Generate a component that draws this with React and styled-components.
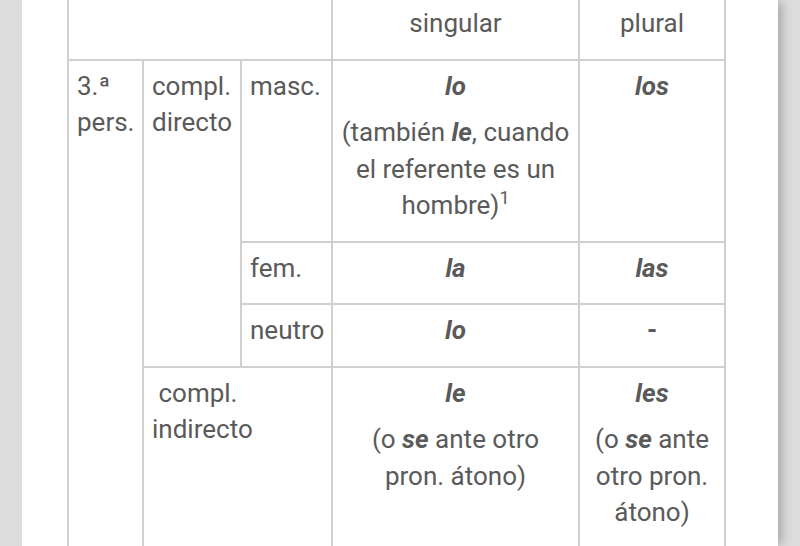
import styled, { createGlobalStyle } from 'styled-components';

const GlobalStyle = createGlobalStyle`
    html, body {
        margin: 0;
        padding: 0;
        background: #dcdcdc;
        overflow: hidden;
    }
    body {
        font-family: Roboto, "Noto Sans", "Liberation Sans", sans-serif;
    }
`

const Page = styled.div`
    margin: 0 22px;
    min-height: 100vh;
    background: #ffffff;
    padding-left: 45px;
    box-shadow: 9px 0 10px -6px rgba(0, 0, 0, 0.28);
`

const Table = styled.table`
    border-collapse: collapse;
    table-layout: fixed;
    width: 657px;
    margin-top: -4px;
    color: #5a5a5a;
    font-size: 26px;
    line-height: 36.5px;
`

const Cell = styled.td`
    border: 2px solid #d0d0d0;
    vertical-align: top;
    text-align: ${(props) => (props.$center ? 'center' : 'left')};
    padding: ${(props) => (props.$center ? '7px 8px 17px' : '7px 2px 17px 8px')};
`

const Para = styled.div`
    & + & {
        margin-top: 10px;
    }
`

const Form = styled.b`
    font-weight: 700;
    font-style: ${(props) => (props.$plain ? 'normal' : 'italic')};
`

const Note = styled.sup`
    font-size: 18px;
    line-height: 0;
    vertical-align: 10px;
`

const App = () => {
    const widths = [75, 98, 91, 247, 146]

    return (
        <>
            <GlobalStyle />
            <Page>
                <Table>
                    <colgroup>
                        {widths.map((w, i) => (
                            <col key={i} style={{ width: `${w}px` }} />
                        ))}
                    </colgroup>
                    <tbody>
                        <tr>
                            <Cell colSpan={3}></Cell>
                            <Cell $center>singular</Cell>
                            <Cell $center>plural</Cell>
                        </tr>
                        <tr>
                            <Cell rowSpan={4}>3.ª pers.</Cell>
                            <Cell rowSpan={3}>compl. directo</Cell>
                            <Cell>masc.</Cell>
                            <Cell $center>
                                <Para><Form>lo</Form></Para>
                                <Para>
                                    (también <Form>le</Form>, cuando el referente es un hombre)<Note>1</Note>
                                </Para>
                            </Cell>
                            <Cell $center>
                                <Para><Form>los</Form></Para>
                            </Cell>
                        </tr>
                        <tr>
                            <Cell>fem.</Cell>
                            <Cell $center><Para><Form>la</Form></Para></Cell>
                            <Cell $center><Para><Form>las</Form></Para></Cell>
                        </tr>
                        <tr>
                            <Cell>neutro</Cell>
                            <Cell $center><Para><Form>lo</Form></Para></Cell>
                            <Cell $center><Para><Form $plain>-</Form></Para></Cell>
                        </tr>
                        <tr>
                            <Cell colSpan={2}>{'\u00a0'}compl. indirecto</Cell>
                            <Cell $center>
                                <Para><Form>le</Form></Para>
                                <Para>(o <Form>se</Form> ante otro pron. átono)</Para>
                            </Cell>
                            <Cell $center>
                                <Para><Form>les</Form></Para>
                                <Para>(o <Form>se</Form> ante otro pron. átono)</Para>
                            </Cell>
                        </tr>
                    </tbody>
                </Table>
            </Page>
        </>
    )
}

export default App
